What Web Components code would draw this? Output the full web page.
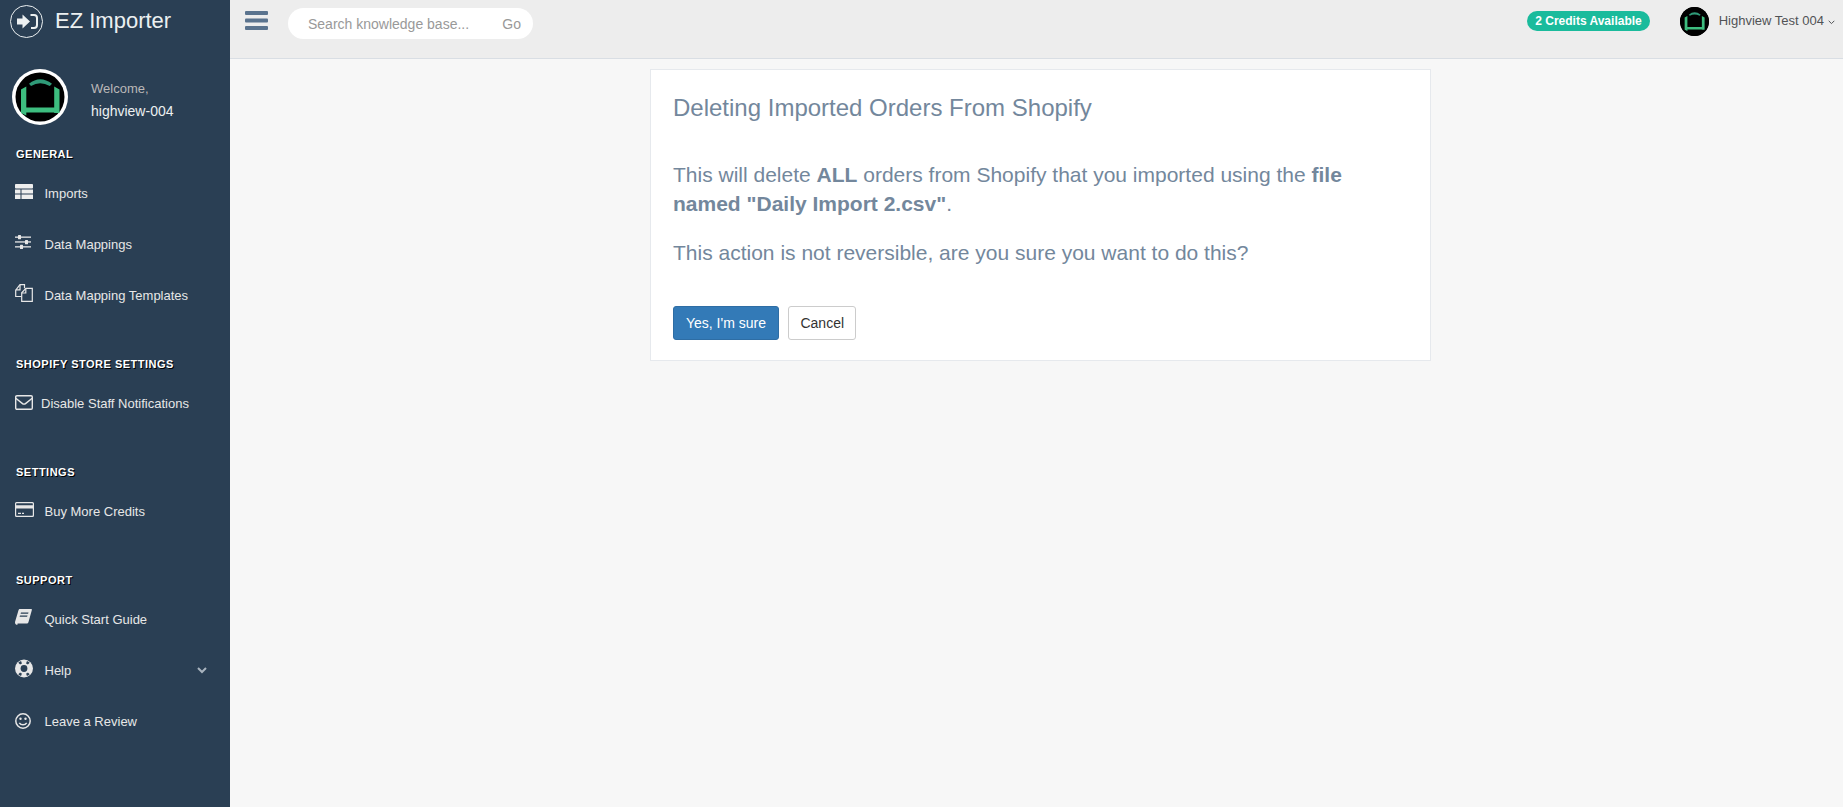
<!DOCTYPE html>
<html lang="en"><head><meta charset="utf-8"><title>EZ Importer</title>
<style>
html,body{margin:0;padding:0;height:100%;overflow:hidden;background:#f7f7f7;font-family:"Liberation Sans",Arial,sans-serif;}
</style></head><body>
<template id="t-avatar"><style>
:host{display:block;width:var(--s,56px);height:var(--s,56px);flex:none}
svg{display:block;width:100%;height:100%}
.ring{fill:var(--ring,#fff)}
.inner{r:var(--inner,24.5px);fill:#000}
</style><svg viewBox="0 0 56 56"><circle class="ring" cx="28" cy="28" r="28"/><circle class="inner" cx="28" cy="28" r="24.5"/>
<path d="M9 20.500L14.300 17.500V38.400H42.200V17.500L47.500 20.500V44H42.200V43.500H14.300V46.500L9 44z" fill="#3dbd7f"/><path d="M17 14.800Q28 5.500 40 14.800L37.800 17Q28 11.500 19 17z" fill="#2f9a78"/></svg></template>
<template id="t-shell"><style>
:host{display:grid;grid-template-columns:230px 1fr;height:100vh;width:100%}
.main{display:flex;flex-direction:column;min-width:0}
.content{flex:1;padding:10px 0 0 420px}
</style><slot name="side"></slot><div class="main"><slot name="top"></slot><div class="content"><slot></slot></div></div></template>
<template id="t-side"><style>
:host{display:block;background:#2a3f54;color:#e7e7e7;font-size:13px}
.brand{height:42px;display:flex;align-items:center;gap:12px;padding-left:10px;color:#ecf0f1;font-size:22px}
.brand svg{width:33px;height:33px;flex:none}
.profile{display:flex;align-items:center;gap:23px;padding:27px 0 0 12px;height:56px}
.who{display:flex;flex-direction:column;gap:6px;padding-top:6px}
.welcome{font-size:13px;line-height:17px;color:#bab8b8}
.name{font-size:14px;line-height:17px;color:#ecf0f1}
.list{padding-top:23px}
</style><div class="brand"><svg viewBox="0 0 33 33"><circle cx="16.500" cy="16.500" r="16" fill="none" stroke="#ecf0f1" stroke-width="1"/><path d="M7 13.500h5.500V9.500l7.500 7-7.500 7v-4H7z" fill="#ecf0f1"/><path d="M20.500 10h3.500a3 3 0 0 1 3 3v7a3 3 0 0 1-3 3h-3" fill="none" stroke="#ecf0f1" stroke-width="2"/></svg><span>EZ Importer</span></div>
<div class="profile"><app-avatar></app-avatar><div class="who"><span class="welcome">Welcome,</span><span class="name">highview-004</span></div></div>
<div class="list"><slot></slot></div></template>
<template id="t-section"><style>
:host{display:block;margin-bottom:38px}
h3{margin:0;padding-left:16px;height:13px;line-height:13px;color:#fff;text-transform:uppercase;letter-spacing:.5px;font-weight:700;font-size:11px;text-shadow:1px 1px #000}
.items{padding-top:6px;display:flex;flex-direction:column}
</style><h3><slot name="title"></slot></h3><div class="items"><slot></slot></div></template>
<template id="t-item"><style>
:host{display:flex;align-items:center;height:51px;padding-left:15px;color:#e7e7e7;font-size:13px;position:relative}
.ic{width:var(--iw,29.500px);flex:none;display:flex;align-items:center;margin-bottom:var(--up,3px)}
.tx{padding-top:2px}
::slotted(svg){display:block;flex:none}
.more{position:absolute;left:197px;top:23px}
</style><span class="ic"><slot name="icon"></slot></span><span class="tx"><slot></slot></span><span class="more"><slot name="more"></slot></span></template>
<template id="t-top"><style>
:host{display:flex;align-items:center;height:58px;background:#ededed;border-bottom:1px solid #d9dee4;padding:0 0 0 15px;box-sizing:content-box}
.bar{display:block;width:23px;height:19px;flex:none;margin:-17px 20px 0 0}
.search{display:flex;align-items:center;justify-content:space-between;box-sizing:border-box;width:245px;height:31px;margin-top:-11px;padding:0 12px 0 20px;background:#fff;border-radius:16px;font-size:14px;color:#999}
.badge{margin-left:auto;display:block;background:#1abb9c;color:#fff;font-weight:700;font-size:12px;line-height:20px;padding:0 8px 0 8.500px;border-radius:10px;margin-top:-16px}
.user{display:flex;align-items:center;margin:-16px 0 0 30px;padding-right:8px;color:#515356;font-size:13px;gap:10px}
.user span{margin-top:-2px}
app-avatar{--s:29px;--ring:#000;--inner:28px}
.chev{display:block;margin:2px 0 0 -6px}
</style><svg class="bar" viewBox="0 0 23 19"><g fill="#5a738e"><rect width="23" height="4" rx="1"/><rect y="7.500" width="23" height="4" rx="1"/><rect y="15" width="23" height="4" rx="1"/></g></svg>
<div class="search"><span>Search knowledge base...</span><span>Go</span></div>
<span class="badge">2 Credits Available</span>
<div class="user"><app-avatar></app-avatar><span>Highview Test 004</span><svg class="chev" width="7" height="5" viewBox="0 0 7 5"><path d="M.7.8l2.800 2.800L6.300.8" fill="none" stroke="#515356"/></svg></div></template>
<template id="t-card"><style>
:host{display:block;box-sizing:border-box;width:781px;height:292px;background:#fff;border:1px solid #e6e9ed;padding:24px 22px;color:#73879c}
h3{margin:0 0 39px;font-weight:400;font-size:24px;line-height:27px}
.body{font-size:21px;line-height:29px}
.body ::slotted(p){margin:0 0 20px}
.actions{display:flex;gap:9.500px;margin-top:39px}
</style><h3><slot name="title"></slot></h3><div class="body"><slot></slot></div><div class="actions"><slot name="actions"></slot></div></template>
<template id="t-btn"><style>
:host{display:block;box-sizing:border-box;height:34px;padding:6px 12px;font-size:14px;line-height:20px;border:1px solid #ccc;border-radius:3px;background:#fff;color:#333}
:host([primary]){background:#337ab7;border-color:#2e6da4;color:#fff}
:host(:not([primary])){padding:6px 11px}
</style><slot></slot></template>

<ez-shell>
<ez-side slot="side">
 <ez-section><span slot="title">General</span>
  <ez-item><svg slot="icon" width="18" height="15" viewBox="0 0 18 15"><g fill="#eeeeee"><rect width="18" height="4.500" rx=".8"/><rect y="5.500" width="5.500" height="4"/><rect x="6.500" y="5.500" width="11.500" height="4"/><rect y="10.500" width="5.500" height="4.500"/><rect x="6.500" y="10.500" width="11.500" height="4.500"/></g></svg>Imports</ez-item>
  <ez-item><svg slot="icon" width="16" height="14" viewBox="0 0 16 14"><g fill="#e7e7e7"><rect y="1.500" width="16" height="1.300"/><rect y="6.300" width="16" height="1.300"/><rect y="11.200" width="16" height="1.300"/><rect x="3" y="0" width="3" height="4.200" rx=".5"/><rect x="10" y="5" width="3" height="4.200" rx=".5"/><rect x="5" y="9.800" width="3" height="4.200" rx=".5"/></g></svg>Data Mappings</ez-item>
  <ez-item><svg slot="icon" width="18" height="18" viewBox="0 0 18 18"><g fill="none" stroke="#e7e7e7" stroke-width="1.200"><path d="M6.500 12.500H.7V6.200L5 .7h4.500v3.500"/><path d="M5 1v4.800H.9"/><path d="M6.700 17.300V8.800l4.200-4.500h6.400v13z"/><path d="M10.800 4.500v4.500H6.800"/></g></svg>Data Mapping Templates</ez-item>
 </ez-section>
 <ez-section><span slot="title">Shopify Store Settings</span>
  <ez-item style="--iw:26px;--up:1px"><svg slot="icon" width="18" height="15" viewBox="0 0 18 15"><g fill="none" stroke="#e7e7e7" stroke-width="1.400"><rect x=".7" y=".7" width="16.600" height="13.600" rx="1.200"/><path d="M.8 3.200l6.400 5.200c1 .8 2.600.8 3.600 0l6.400-5.200"/></g></svg>Disable Staff Notifications</ez-item>
 </ez-section>
 <ez-section><span slot="title">Settings</span>
  <ez-item><svg slot="icon" width="19" height="15" viewBox="0 0 19 15"><path fill="#e7e7e7" fill-rule="evenodd" d="M1.500 0h16A1.500 1.500 0 0 1 19 1.500v12a1.500 1.500 0 0 1-1.500 1.500h-16A1.500 1.500 0 0 1 0 13.500v-12A1.500 1.500 0 0 1 1.500 0zM1.200 6.500v6.800c0 .3.200.5.500.5h15.600c.3 0 .5-.2.500-.5V6.500zM3 10.800h3v1.200H3zM7 10.800h2v1.200H7zM1.200 1.700v1.500h16.600V1.700c0-.3-.2-.5-.5-.5H1.700c-.3 0-.5.2-.5.500z"/></svg>Buy More Credits</ez-item>
 </ez-section>
 <ez-section><span slot="title">Support</span>
  <ez-item><svg slot="icon" width="17" height="16" viewBox="0 0 17 16"><path fill="#e7e7e7" fill-rule="evenodd" d="M5 0h11c.8 0 1 .5.800 1.200L13.500 13c-.3 1-1 1.600-2 1.600H3.500c-.8 0-1.300.3-1.300.7s.5.700 1.300.7h9.500v0H2.500C1 16 0 15 0 13.500c0-.5.100-1 .3-1.500L3.500 1.300C3.800.4 4.200 0 5 0zM6 3.500l-.4 1.200h7.500l.4-1.200zM5 6.500l-.4 1.200h7.500l.4-1.200z"/></svg>Quick Start Guide</ez-item>
  <ez-item><svg slot="icon" width="18" height="19" viewBox="0 0 18 19"><circle cx="9" cy="9.500" r="9" fill="#e7e7e7"/><g stroke="#2a3f54" stroke-width="2.600" stroke-linecap="butt" fill="none"><path d="M4.200 4.700a6.800 6.800 0 0 1 2.300-1.500M13.800 4.700a6.800 6.800 0 0 0-2.300-1.500M4.200 14.300a6.800 6.800 0 0 0 2.300 1.500M13.800 14.300a6.800 6.800 0 0 1-2.300 1.500"/></g><circle cx="9" cy="9.500" r="3.400" fill="#2a3f54"/></svg>Help<svg slot="more" width="10" height="7" viewBox="0 0 10 7" style="display:block"><path d="M1 1l4 4 4-4" fill="none" stroke="#a9b4bf" stroke-width="2"/></svg></ez-item>
  <ez-item style="--up:0px"><svg slot="icon" width="16" height="16" viewBox="0 0 16 16"><g fill="none" stroke="#e7e7e7" stroke-width="1.500"><circle cx="8" cy="8" r="7.200"/><path d="M4.300 9.800c1.800 2.700 5.600 2.700 7.400 0"/></g><circle cx="5.500" cy="5.800" r="1.200" fill="#e7e7e7"/><circle cx="10.500" cy="5.800" r="1.200" fill="#e7e7e7"/></svg>Leave a Review</ez-item>
 </ez-section>
</ez-side>
<ez-top slot="top"></ez-top>
<ez-card>
 <span slot="title">Deleting Imported Orders From Shopify</span>
 <p>This will delete <b>ALL</b> orders from Shopify that you imported using the <b>file named "Daily Import 2.csv"</b>.</p>
 <p>This action is not reversible, are you sure you want to do this?</p>
 <ez-btn slot="actions" primary>Yes, I'm sure</ez-btn>
 <ez-btn slot="actions">Cancel</ez-btn>
</ez-card>
</ez-shell>
<script>
[['app-avatar','t-avatar'],['ez-shell','t-shell'],['ez-side','t-side'],['ez-section','t-section'],['ez-item','t-item'],['ez-top','t-top'],['ez-card','t-card'],['ez-btn','t-btn']].forEach(([n,t])=>{
 customElements.define(n,class extends HTMLElement{constructor(){super();this.attachShadow({mode:'open'}).appendChild(document.getElementById(t).content.cloneNode(true));}});
});
</script>
</body></html>
